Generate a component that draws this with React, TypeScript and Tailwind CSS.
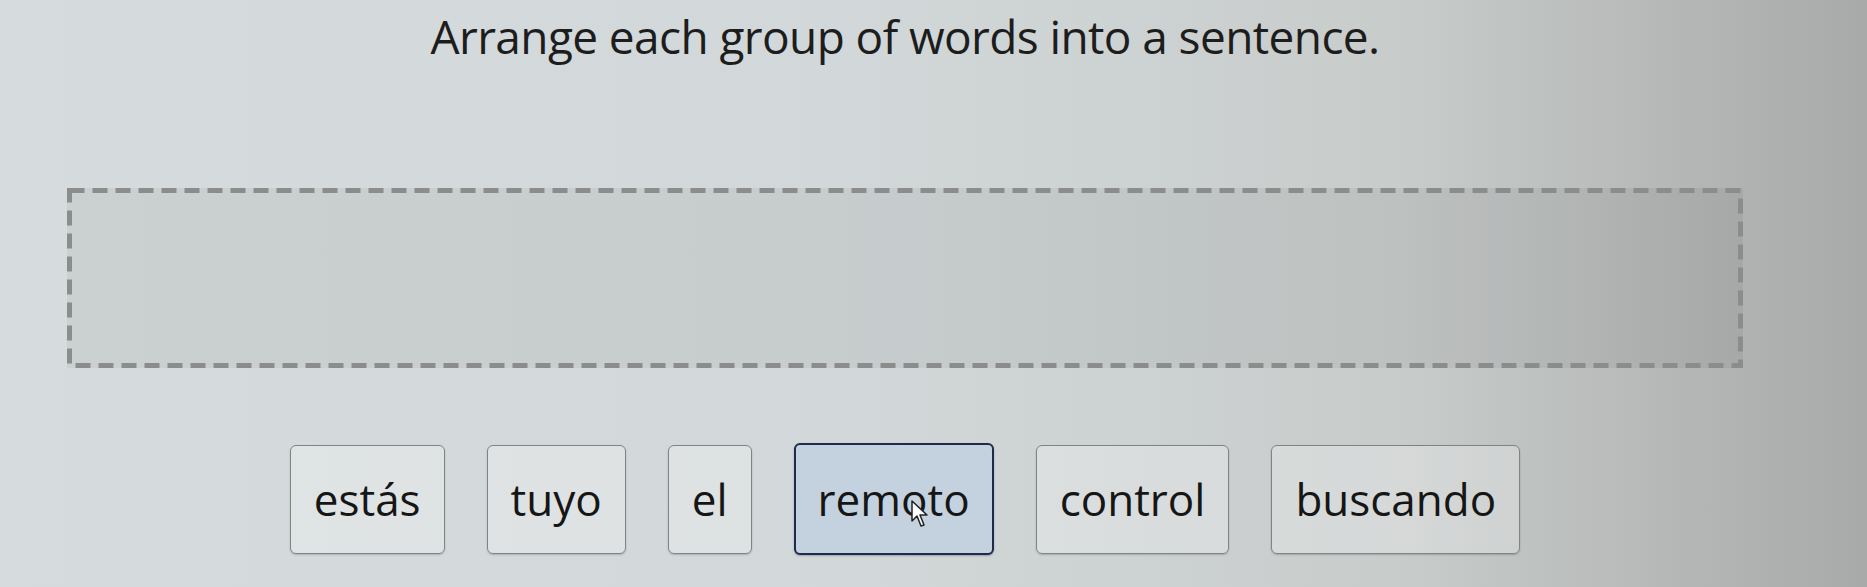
import React from "react";

const words = ["estás", "tuyo", "el", "remoto", "control", "buscando"];

const WordTile = ({ word, active }: { word: string; active?: boolean }) => (
  <button
    className={
      active
        ? "relative h-[112px] px-[22px] rounded-[6px] border-2 border-[#1f2b4d] bg-[#c4d1de] text-[44px] leading-none text-[#161616] shadow-[0_1px_2px_rgba(0,0,0,0.25)]"
        : "relative h-[109px] px-[23px] rounded-[6px] border-[1.5px] border-[#7f8486] bg-white/25 text-[44px] leading-none text-[#161616] shadow-[0_1px_2px_rgba(0,0,0,0.2)]"
    }
  >
    {word}
    {active && (
      // mouse pointer hovering the tile
      <svg
        className="absolute left-[115px] top-[55px]"
        width="18"
        height="28"
        viewBox="0 0 18 28"
      >
        <path
          d="M1 1 L1 21 L6 16 L10 26 L13 25 L9 15 L16 15 Z"
          fill="#fff"
          stroke="#222"
          strokeWidth="1.5"
          strokeLinejoin="round"
        />
      </svg>
    )}
  </button>
);

export default function App() {
  return (
    <div
      className="w-[1867px] h-[587px] overflow-hidden bg-[linear-gradient(90deg,#d6dcdd_0%,#d2d8d9_45%,#c8cccb_75%,#b4b7b6_90%,#a7aaa9_100%)]"
      style={{ fontFamily: '"Open Sans", "Noto Sans", sans-serif' }}
    >
      <div className="flex flex-col items-center pl-[67px] pr-[124px]">
        <h1 className="mt-[5px] text-[46px] leading-[62px] text-[#1d1d1d] tracking-[-0.6px]">
          Arrange each group of words into a sentence.
        </h1>

        {/* drop zone */}
        <div className="relative mt-[121px] w-[1676px] h-[180px] bg-black/5">
          <svg className="absolute inset-0" width="1676" height="180">
            <rect
              x="2.5"
              y="2.5"
              width="1671"
              height="175"
              fill="none"
              stroke="#8a8d8c"
              strokeWidth="5"
              strokeDasharray="15 8"
            />
          </svg>
        </div>

        <div className="mt-[75px] flex items-center gap-[42px]">
          {words.map((w) => (
            <WordTile key={w} word={w} active={w === "remoto"} />
          ))}
        </div>
      </div>
    </div>
  );
}
